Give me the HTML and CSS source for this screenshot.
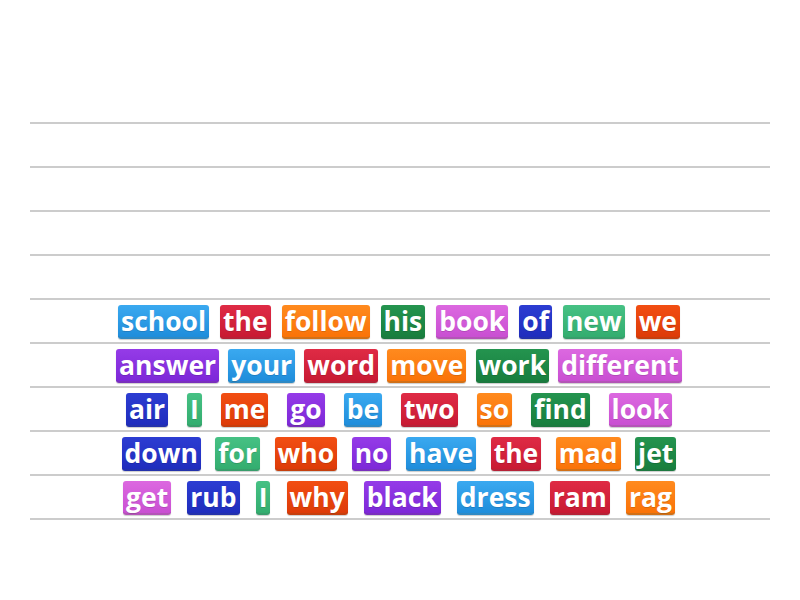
FILE: index.html
```html
<!DOCTYPE html>
<html>
<head>
<meta charset="utf-8">
<link rel="stylesheet" href="styles.css">
</head>
<body>
<div class="board">
  <div class="row"></div>
  <div class="row"></div>
  <div class="row"></div>
  <div class="row"></div>
  <div class="row"></div>
  <div class="row">
    <div class="words">
      <span class="tile blue">school</span><span class="tile red">the</span><span class="tile orange">follow</span><span class="tile green">his</span><span class="tile pink">book</span><span class="tile navy">of</span><span class="tile teal">new</span><span class="tile rorange">we</span>
    </div>
  </div>
  <div class="row">
    <div class="words">
      <span class="tile purple">answer</span><span class="tile blue">your</span><span class="tile red">word</span><span class="tile orange">move</span><span class="tile green">work</span><span class="tile pink">different</span>
    </div>
  </div>
  <div class="row">
    <div class="words">
      <span class="tile navy">air</span><span class="tile teal">I</span><span class="tile rorange">me</span><span class="tile purple">go</span><span class="tile blue">be</span><span class="tile red">two</span><span class="tile orange">so</span><span class="tile green">find</span><span class="tile pink">look</span>
    </div>
  </div>
  <div class="row">
    <div class="words">
      <span class="tile navy">down</span><span class="tile teal">for</span><span class="tile rorange">who</span><span class="tile purple">no</span><span class="tile blue">have</span><span class="tile red">the</span><span class="tile orange">mad</span><span class="tile green">jet</span>
    </div>
  </div>
  <div class="row">
    <div class="words">
      <span class="tile pink">get</span><span class="tile navy">rub</span><span class="tile teal">I</span><span class="tile rorange">why</span><span class="tile purple">black</span><span class="tile blue">dress</span><span class="tile red">ram</span><span class="tile orange">rag</span>
    </div>
  </div>
</div>
</body>
</html>
```

FILE: styles.css
```css
html, body {
  margin: 0;
  padding: 0;
  background: #ffffff;
}

.board {
  margin: 80px 30px 0 30px;
  width: 740px;
}

.row {
  height: 42px;
  border-bottom: 2px solid #cccccc;
}

.words {
  display: flex;
  justify-content: space-evenly;
  align-items: flex-start;
  width: 584px;
  margin: 0 auto;
  padding-top: 5px;
  position: relative;
  left: -1px;
}

.tile {
  display: block;
  font-family: "Open Sans", "DejaVu Sans", sans-serif;
  font-weight: 700;
  font-size: 26.5px;
  line-height: 33px;
  height: 34px;
  box-sizing: border-box;
  padding: 0 3px;
  color: #ffffff;
  border-radius: 3px;
  border-bottom: 2px solid rgba(0, 0, 0, 0.18);
  box-shadow: 0 1px 1px rgba(0, 0, 0, 0.2);
  text-shadow: 0 1px 0 rgba(0, 0, 0, 0.15);
}

.blue { background: linear-gradient(#3aa9f0, #1f8ddb); }
.red { background: linear-gradient(#df2b45, #c81a33); }
.orange { background: linear-gradient(#ff8a1e, #fa7308); }
.green { background: linear-gradient(#24944f, #187e3e); }
.pink { background: linear-gradient(#dc68e0, #c94fd2); }
.navy { background: linear-gradient(#2c3dd2, #1f2dbd); }
.teal { background: linear-gradient(#46c184, #33ad6f); }
.rorange { background: linear-gradient(#f24e12, #dd3b08); }
.purple { background: linear-gradient(#953be8, #7d28d8); }
```
